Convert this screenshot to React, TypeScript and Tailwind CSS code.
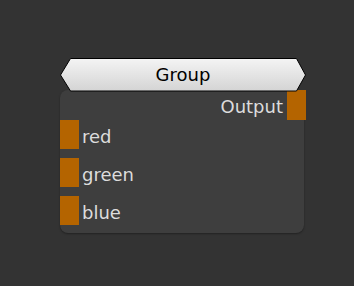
export default function App() {
  const inputs = ["red", "green", "blue"]

  return (
    <div className="w-[354px] h-[286px] bg-[#333333] pt-[58px] pl-[60px] font-[family-name:DejaVu_Sans,Verdana,sans-serif]">
      <div className="w-[246px] flex flex-col">
        {/* Header */}
        <div className="relative h-[33px] flex items-center justify-center">
          <svg className="absolute inset-0" width="246" height="34" viewBox="0 0 246 34">
            <defs>
              <linearGradient id="hdr" x1="0" y1="0" x2="0" y2="1">
                <stop offset="0" stopColor="#f4f4f4" />
                <stop offset="1" stopColor="#d4d4d4" />
              </linearGradient>
            </defs>
            <polygon
              points="10.5,0.5 236.5,0.5 245.5,17 236.5,33 10.5,33 0.5,17"
              fill="url(#hdr)"
              stroke="#000"
              strokeWidth="1"
            />
          </svg>
          <span className="relative text-[18px] text-black leading-none">Group</span>
        </div>

        {/* Body */}
        <div className="w-[244px] -mt-px rounded-lg bg-[#3e3e3e] pb-[8px] shadow-[0_1px_2px_rgba(0,0,0,0.35)]">
          <div className="flex justify-end items-center gap-[4px] -mr-[2px] h-[30px]">
            <span className="text-[18px] text-[#dcdcdc] pt-[2px]">Output</span>
            <div className="w-[19px] h-[30px] bg-[#b46400]" />
          </div>
          <div className="flex flex-col gap-[9px]">
            {inputs.map((name) => (
              <div key={name} className="flex items-center gap-[3px] h-[29px]">
                <div className="w-[19px] h-[29px] bg-[#b46400]" />
                <span className="text-[18px] text-[#dcdcdc] pt-[4px]">{name}</span>
              </div>
            ))}
          </div>
        </div>
      </div>
    </div>
  )
}
